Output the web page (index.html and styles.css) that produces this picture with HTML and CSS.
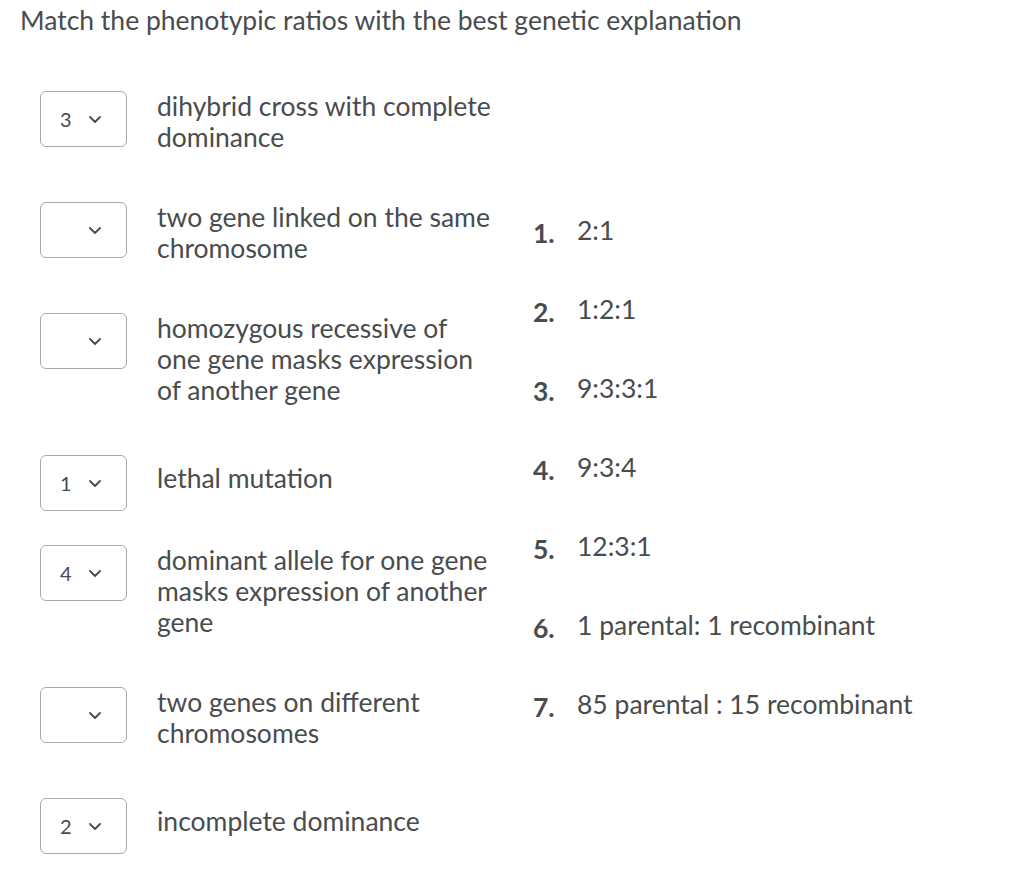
FILE: index.html
```html
<!DOCTYPE html>
<html lang="en">
<head>
<meta charset="utf-8">
<title>Match the phenotypic ratios</title>
<link rel="stylesheet" href="styles.css">
</head>
<body>
<h1 class="title">Match the phenotypic ratios with the best genetic explanation</h1>
<div class="question">
  <div class="matches">
    <div class="match">
      <div class="select"><span class="select-value">3</span><svg class="chev" viewBox="0 0 12 7"><path d="M1 1 L6 6 L11 1"/></svg></div>
      <div class="match-text">dihybrid cross with complete dominance</div>
    </div>
    <div class="match">
      <div class="select"><span class="select-value"></span><svg class="chev" viewBox="0 0 12 7"><path d="M1 1 L6 6 L11 1"/></svg></div>
      <div class="match-text">two gene linked on the same chromosome</div>
    </div>
    <div class="match">
      <div class="select"><span class="select-value"></span><svg class="chev" viewBox="0 0 12 7"><path d="M1 1 L6 6 L11 1"/></svg></div>
      <div class="match-text">homozygous recessive of one gene masks expression of another gene</div>
    </div>
    <div class="match match--single match--tight">
      <div class="select"><span class="select-value">1</span><svg class="chev" viewBox="0 0 12 7"><path d="M1 1 L6 6 L11 1"/></svg></div>
      <div class="match-text">lethal mutation</div>
    </div>
    <div class="match">
      <div class="select"><span class="select-value">4</span><svg class="chev" viewBox="0 0 12 7"><path d="M1 1 L6 6 L11 1"/></svg></div>
      <div class="match-text">dominant allele for one gene masks expression of another gene</div>
    </div>
    <div class="match">
      <div class="select"><span class="select-value"></span><svg class="chev" viewBox="0 0 12 7"><path d="M1 1 L6 6 L11 1"/></svg></div>
      <div class="match-text">two genes on different chromosomes</div>
    </div>
    <div class="match match--single">
      <div class="select"><span class="select-value">2</span><svg class="chev" viewBox="0 0 12 7"><path d="M1 1 L6 6 L11 1"/></svg></div>
      <div class="match-text">incomplete dominance</div>
    </div>
  </div>
  <ol class="choices">
    <li class="choice"><span class="choice-num">1.</span><span class="choice-text">2:1</span></li>
    <li class="choice"><span class="choice-num">2.</span><span class="choice-text">1:2:1</span></li>
    <li class="choice"><span class="choice-num">3.</span><span class="choice-text">9:3:3:1</span></li>
    <li class="choice"><span class="choice-num">4.</span><span class="choice-text">9:3:4</span></li>
    <li class="choice"><span class="choice-num">5.</span><span class="choice-text">12:3:1</span></li>
    <li class="choice"><span class="choice-num">6.</span><span class="choice-text">1 parental: 1 recombinant</span></li>
    <li class="choice"><span class="choice-num">7.</span><span class="choice-text">85 parental : 15 recombinant</span></li>
  </ol>
</div>
</body>
</html>
```

FILE: styles.css
```css
html, body {
  margin: 0;
  padding: 0;
  background: #ffffff;
}

body {
  font-family: Lato, "Open Sans", "Liberation Sans", sans-serif;
  color: #494c4e;
}

.title {
  margin: 0;
  padding: 5px 0 0 20px;
  font-size: 26.5px;
  line-height: 30px;
  font-weight: 400;
}

.question {
  display: flex;
  align-items: flex-start;
  padding: 56px 0 0 40px;
}

.matches {
  display: flex;
  flex-direction: column;
  gap: 49px;
  width: 457px;
}

.match {
  display: flex;
  align-items: flex-start;
  gap: 30px;
}

.match--tight {
  margin-bottom: -15px;
}

.select {
  flex: none;
  box-sizing: border-box;
  width: 87px;
  height: 56px;
  border: 1px solid #a9a9a9;
  border-radius: 6px;
  display: flex;
  align-items: center;
  padding-left: 19px;
  gap: 17px;
}

.select-value {
  width: 12px;
  font-size: 20px;
  line-height: 20px;
  color: #494c4e;
}

.chev {
  width: 12px;
  height: 7px;
  fill: none;
  stroke: #494c4e;
  stroke-width: 1.8;
  stroke-linecap: round;
  stroke-linejoin: round;
}

.match-text {
  width: 340px;
  padding-top: 0;
  font-size: 26.5px;
  line-height: 31px;
}

.match--single .match-text {
  padding-top: 8px;
}

.choices {
  list-style: none;
  margin: 124px 0 0 36px;
  padding: 0;
  display: flex;
  flex-direction: column;
  gap: 45px;
}

.choice {
  display: flex;
  align-items: flex-start;
  font-size: 26.5px;
  line-height: 31px;
}

.choice-num {
  width: 44px;
  padding-top: 3px;
  font-weight: 700;
}
```
